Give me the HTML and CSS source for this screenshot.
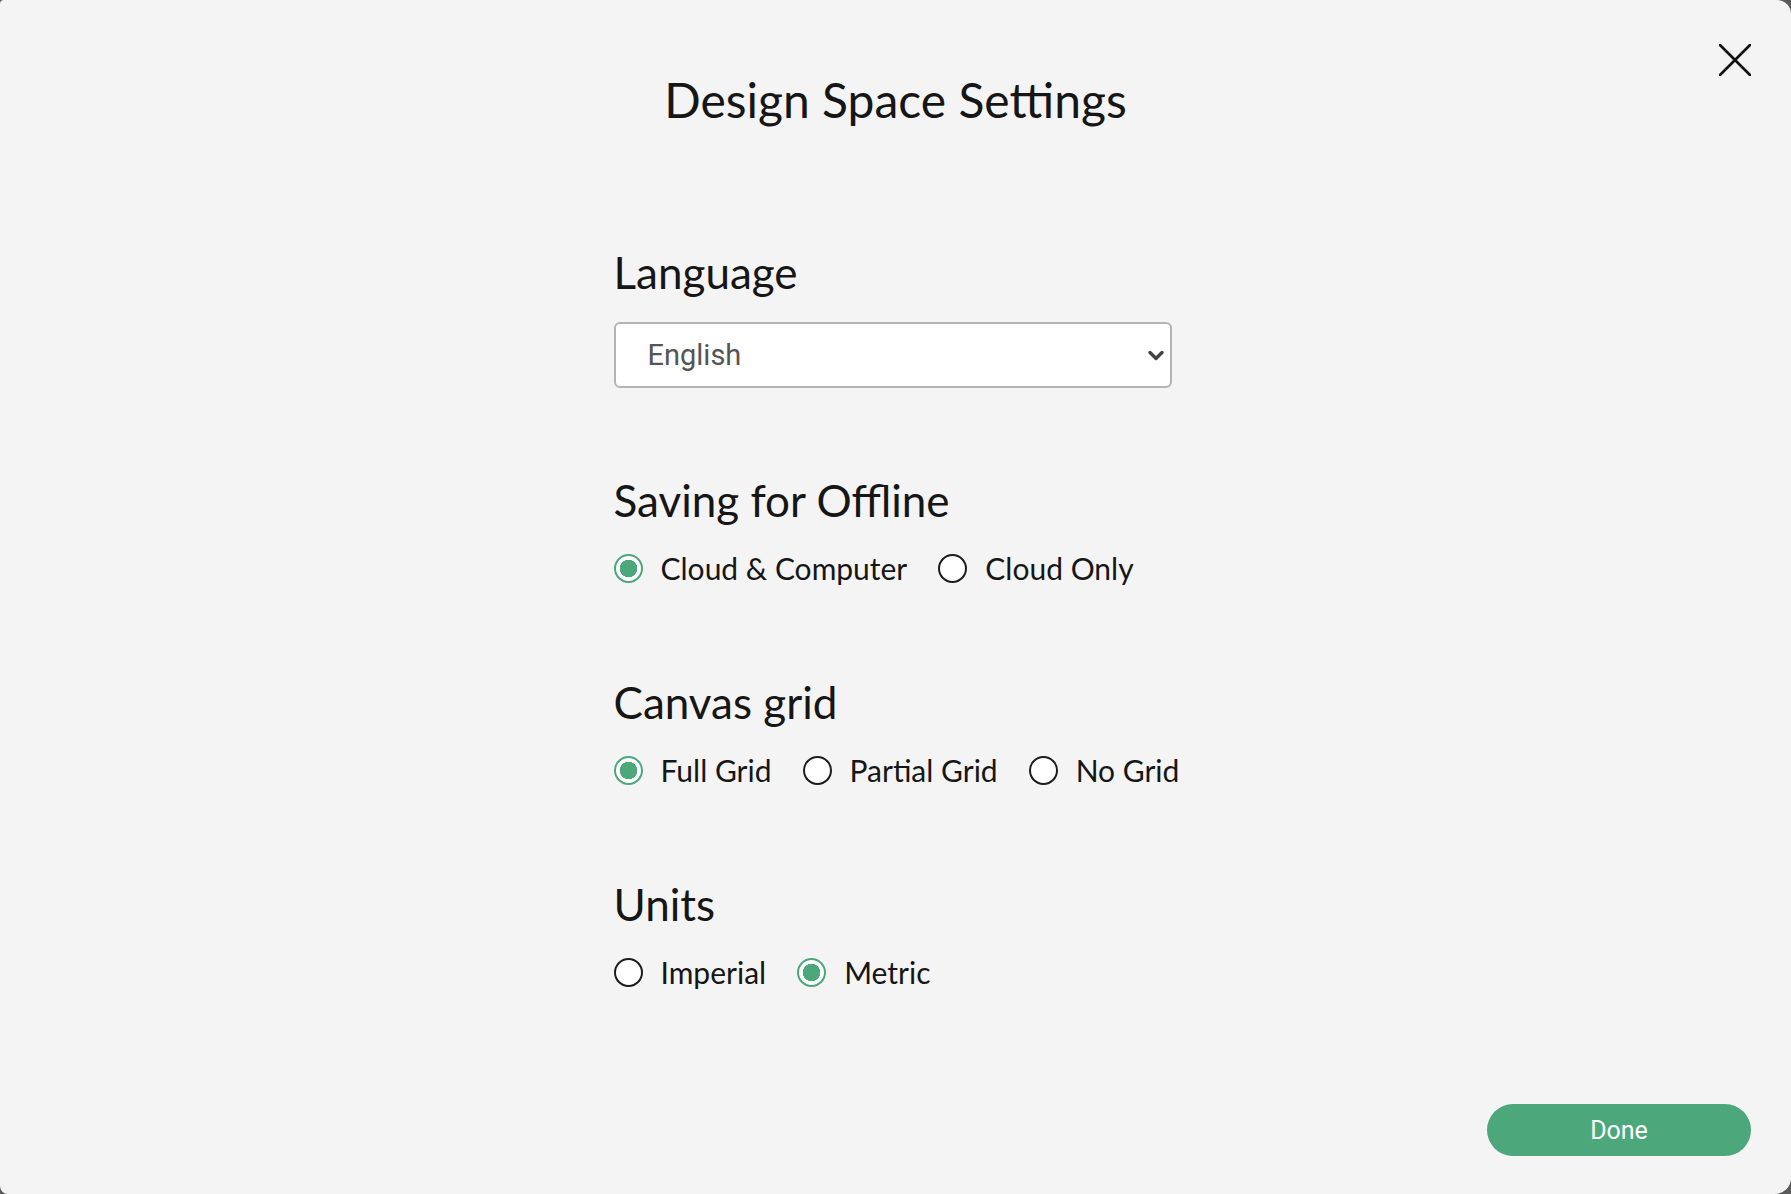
FILE: index.html
```html
<!DOCTYPE html>
<html lang="en">
<head>
<meta charset="utf-8">
<title>Design Space Settings</title>
<link rel="stylesheet" href="styles.css">
</head>
<body>
  <div class="dialog">
    <button class="close-btn" type="button" aria-label="Close">
      <svg width="32" height="32" viewBox="0 0 32 32"><path d="M1 1 L31 31 M31 1 L1 31" stroke="#111" stroke-width="2.6" fill="none" stroke-linecap="round"/></svg>
    </button>

    <h1 class="title">Design Space Settings</h1>

    <div class="content">
      <div class="section section-lang">
        <h2>Language</h2>
        <div class="select-wrap">
          <select class="lang-select">
            <option>English</option>
          </select>
          <svg class="chevron" width="16" height="12" viewBox="0 0 16 12"><path d="M2 2.5 L8 8.5 L14 2.5" stroke="#444" stroke-width="3.4" fill="none" stroke-linecap="round" stroke-linejoin="round"/></svg>
        </div>
      </div>

      <div class="section">
        <h2>Saving for Offline</h2>
        <div class="radio-row">
          <label class="radio"><span class="dot checked"></span>Cloud &amp; Computer</label>
          <label class="radio"><span class="dot"></span>Cloud Only</label>
        </div>
      </div>

      <div class="section">
        <h2>Canvas grid</h2>
        <div class="radio-row">
          <label class="radio"><span class="dot checked"></span>Full Grid</label>
          <label class="radio"><span class="dot"></span>Partial Grid</label>
          <label class="radio"><span class="dot"></span>No Grid</label>
        </div>
      </div>

      <div class="section">
        <h2>Units</h2>
        <div class="radio-row">
          <label class="radio"><span class="dot"></span>Imperial</label>
          <label class="radio"><span class="dot checked"></span>Metric</label>
        </div>
      </div>
    </div>

    <div class="footer">
      <button class="done-btn" type="button">Done</button>
    </div>
  </div>
</body>
</html>
```

FILE: styles.css
```css
* {
	box-sizing: border-box;
}
html, body {
	margin: 0;
	padding: 0;
}
body {
	background: #5b5b5b;
	font-family: Lato, "Noto Sans", sans-serif;
	color: #161616;
}
.dialog {
	position: relative;
	height: 100vh;
	background: #f4f4f4;
	border-radius: 4px 14px 16px 8px;
	display: flex;
	flex-direction: column;
	padding-top: 76px;
}
.close-btn {
	position: absolute;
	top: 44px;
	right: 40px;
	width: 32px;
	height: 32px;
	padding: 0;
	border: none;
	background: none;
	cursor: pointer;
}
.close-btn svg {
	display: block;
}
.title {
	margin: 0;
	font-size: 48px;
	line-height: 1;
	font-weight: 400;
	text-align: center;
}
.content {
	width: 564px;
	margin: 126px auto 0;
}
.section {
	margin-bottom: 96px;
}
.section-lang {
	margin-bottom: 90px;
}
.section h2 {
	margin: 0 0 30px;
	font-size: 44px;
	line-height: 1;
	font-weight: 400;
}
.section-lang h2 {
	margin-bottom: 28px;
}
.select-wrap {
	position: relative;
	width: 558px;
}
.lang-select {
	-webkit-appearance: none;
	appearance: none;
	display: block;
	width: 100%;
	height: 66px;
	padding: 0 0 0 32px;
	border: 2px solid #b4b4b4;
	border-radius: 6px;
	background: #fff;
	font-family: Roboto, "Noto Sans", sans-serif;
	font-size: 29px;
	color: #555;
	outline: none;
}
.chevron {
	position: absolute;
	right: 8px;
	top: 28px;
	pointer-events: none;
}
.radio-row {
	display: flex;
	align-items: center;
	gap: 31px;
	height: 32px;
}
.radio {
	display: flex;
	align-items: center;
	gap: 18px;
	font-size: 30px;
	line-height: 32px;
	white-space: nowrap;
	cursor: pointer;
}
.dot {
	width: 29px;
	height: 29px;
	border-radius: 50%;
	border: 2px solid #1c1c1c;
	background: #fff;
	flex-shrink: 0;
}
.dot.checked {
	border-color: #4ca77b;
	background: radial-gradient(circle, #4ca77b 0, #4ca77b 8.5px, #fff 9px);
}
.footer {
	margin-top: auto;
	display: flex;
	justify-content: flex-end;
	padding: 0 40px 38px 0;
}
.done-btn {
	width: 264px;
	height: 52px;
	border: none;
	border-radius: 26px;
	background: #4ca77b;
	color: #fff;
	font-family: Roboto, "Noto Sans", sans-serif;
	font-size: 25px;
	cursor: pointer;
}
```
